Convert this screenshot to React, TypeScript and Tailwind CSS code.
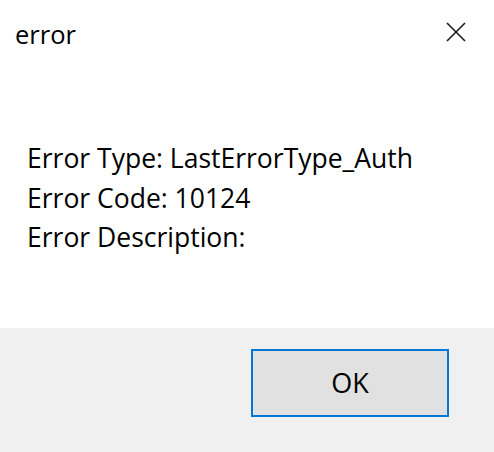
export default function App() {
  return (
    <div className="w-[494px] h-[452px] flex flex-col bg-white text-black font-['Segoe_UI','Open_Sans',sans-serif]">
      {/* Title bar */}
      <div className="flex items-start justify-between h-[72px] pl-[15px] pr-[28px] pt-[15px]">
        <span className="text-[25.5px] leading-[38px]">error</span>
        <button type="button" className="mt-[7px] w-[20px] h-[20px] text-[#1b1b1b]" title="Close">
          <svg viewBox="0 0 20 20" className="w-[20px] h-[20px]" fill="none" stroke="currentColor" strokeWidth={1.6}>
            <path d="M1 1L19 19M19 1L1 19" />
          </svg>
        </button>
      </div>

      {/* Message */}
      <div className="flex-1 pl-[27px] pt-[67px] text-[26.5px] leading-[39.5px]">
        <div>Error Type: LastErrorType_Auth</div>
        <div>Error Code: 10124</div>
        <div>Error Description:</div>
      </div>

      {/* Footer */}
      <div className="h-[124px] bg-[#f0f0f0] flex justify-end items-start pt-[21px] pr-[45px]">
        <button
          type="button"
          className="w-[198px] h-[68px] bg-[#e1e1e1] border-2 border-[#0078d7] text-[27px] flex items-center justify-center"
        >
          OK
        </button>
      </div>
    </div>
  )
}
